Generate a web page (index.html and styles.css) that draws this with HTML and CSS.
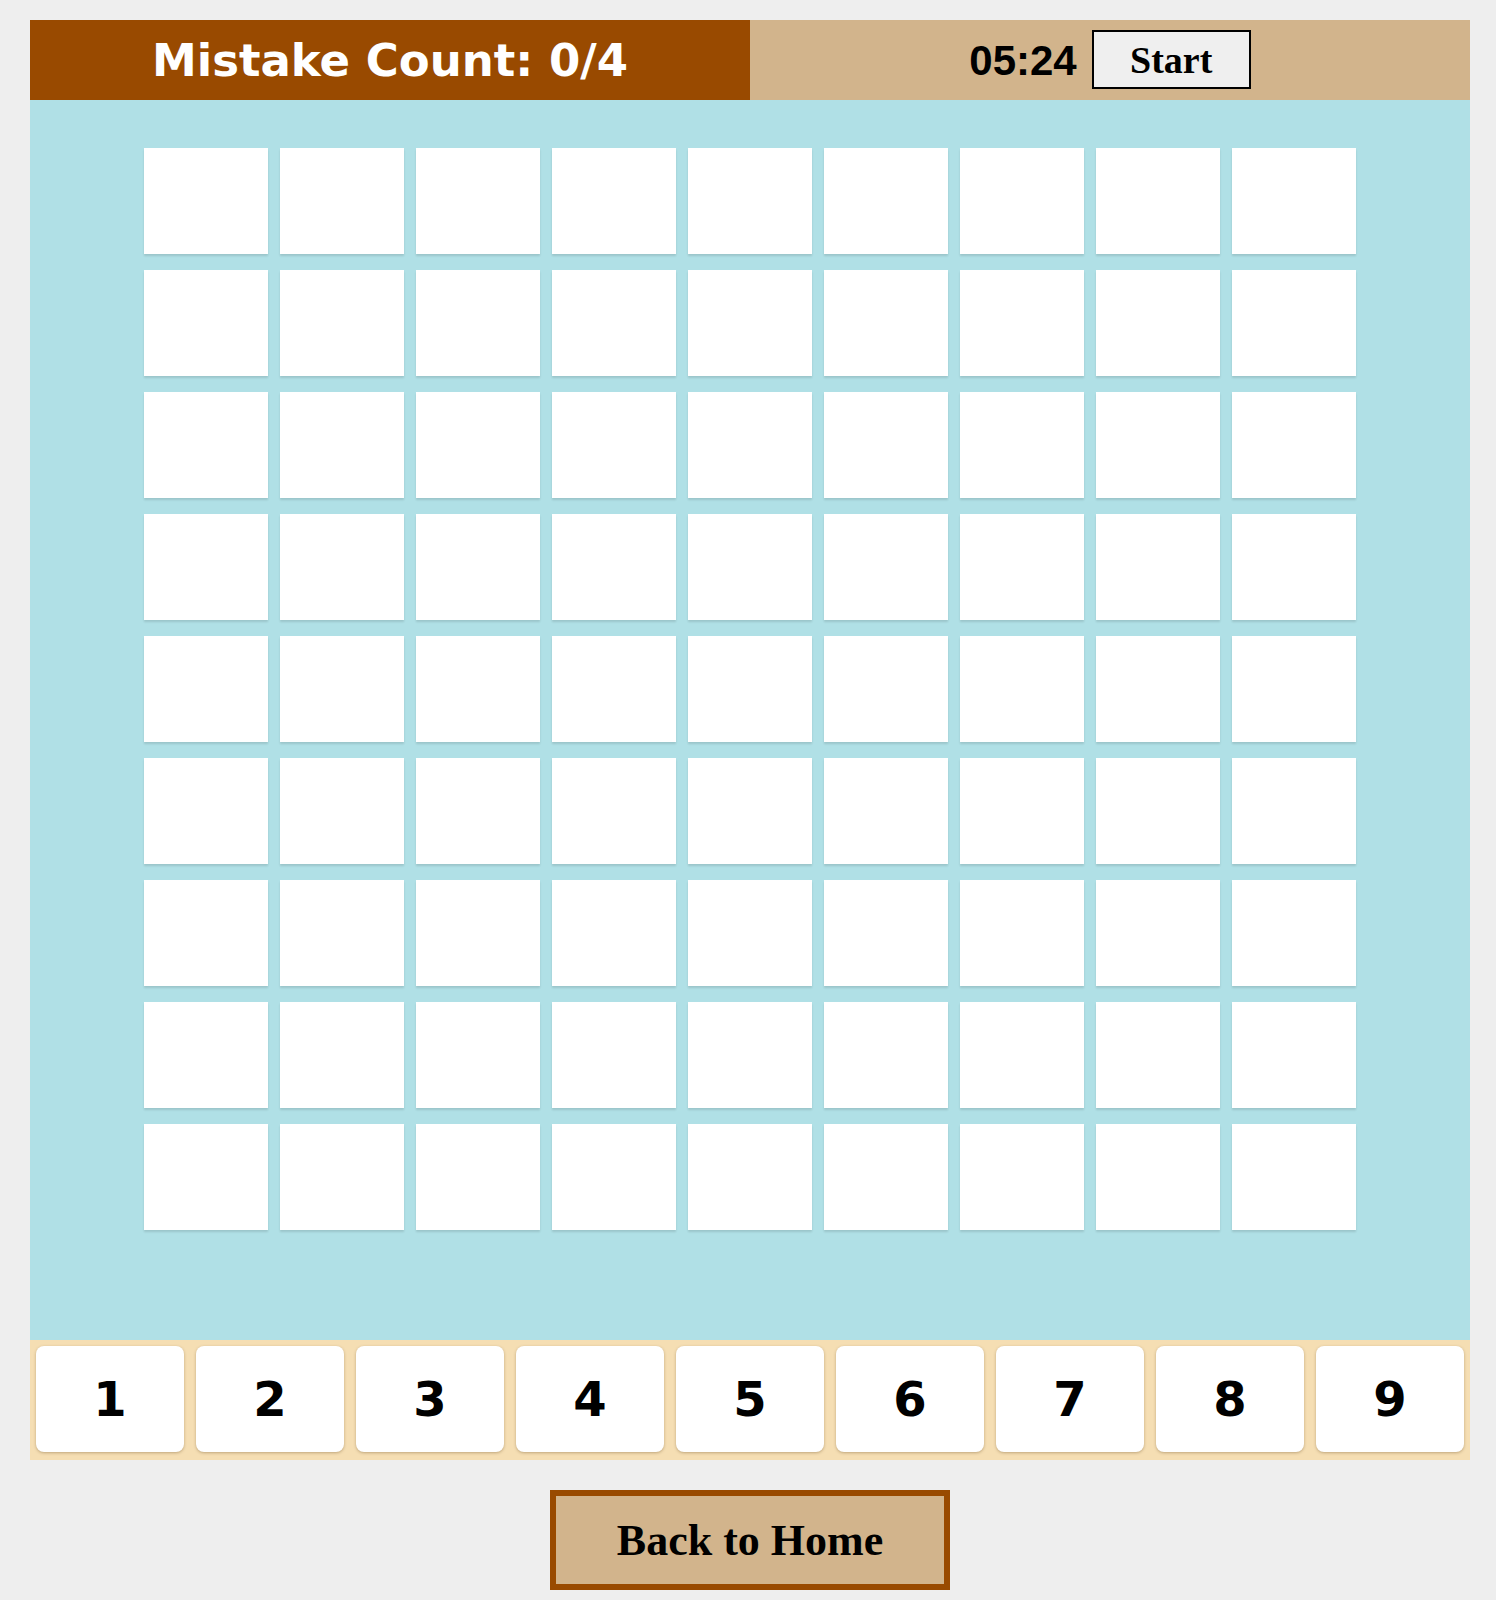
FILE: index.html
```html
<!DOCTYPE html>
<html lang="en">
<head>
<meta charset="utf-8">
<title>Sudoku</title>
<link rel="stylesheet" href="styles.css">
</head>
<body>
<div class="game">
  <div class="topbar">
    <div class="mistakes">Mistake Count: 0/4</div>
    <div class="timer-area">
      <span class="timer">05:24</span>
      <button class="start-btn">Start</button>
    </div>
  </div>
  <div class="board-area">
    <div class="board" id="board"></div>
  </div>
  <div class="numpad">
    <button class="num">1</button>
    <button class="num">2</button>
    <button class="num">3</button>
    <button class="num">4</button>
    <button class="num">5</button>
    <button class="num">6</button>
    <button class="num">7</button>
    <button class="num">8</button>
    <button class="num">9</button>
  </div>
  <div class="footer">
    <button class="home-btn">Back to Home</button>
  </div>
</div>
<script src="script.js"></script>
</body>
</html>
```
FILE: styles.css
```css
html, body {
  margin: 0;
  padding: 0;
  background: #eeeeee;
}
body {
  font-family: "DejaVu Sans", Verdana, sans-serif;
}
.game {
  width: 1440px;
  margin: 20px 0 0 30px;
}
.topbar {
  display: flex;
  height: 80px;
}
.mistakes {
  flex: 1;
  background: #994a00;
  color: #ffffff;
  font-family: "DejaVu Sans", Verdana, sans-serif;
  font-weight: bold;
  font-size: 45px;
  display: flex;
  align-items: center;
  justify-content: center;
}
.timer-area {
  flex: 1;
  background: #d2b48c;
  display: flex;
  align-items: center;
  justify-content: center;
  gap: 15px;
}
.timer {
  font-family: "Liberation Sans", Arial, sans-serif;
  font-weight: bold;
  font-size: 42px;
  color: #000;
  padding-top: 2px;
}
.start-btn {
  width: 159px;
  height: 59px;
  margin-top: -1px;
  border: 2px solid #000;
  background: #efefef;
  font-family: "Liberation Serif", "Times New Roman", serif;
  font-weight: bold;
  font-size: 38px;
  color: #000;
  padding: 0;
  line-height: 1;
}
.board-area {
  background: #b0e0e6;
  height: 1240px;
  padding-top: 48px;
  box-sizing: border-box;
}
.board {
  display: grid;
  grid-template-columns: repeat(9, 124px);
  grid-auto-rows: 106px;
  column-gap: 12px;
  row-gap: 16px;
  justify-content: center;
}
.cell {
  background: #ffffff;
  box-shadow: 0 2px 2px rgba(0, 0, 0, 0.12);
}
.numpad {
  background: #f5deb3;
  height: 120px;
  box-sizing: border-box;
  padding: 6px 6px 8px;
  display: grid;
  grid-template-columns: repeat(9, 1fr);
  column-gap: 12px;
}
.num {
  background: #ffffff;
  border: none;
  border-radius: 8px;
  box-shadow: 0 1px 3px rgba(90, 60, 20, 0.35);
  font-family: "DejaVu Sans", Verdana, sans-serif;
  font-weight: bold;
  font-size: 48px;
  color: #000;
  padding: 0;
  height: 106px;
}
.footer {
  display: flex;
  justify-content: center;
  padding-top: 30px;
}
.home-btn {
  width: 400px;
  height: 100px;
  border: 6px solid #994a00;
  background: #d2b48c;
  font-family: "Liberation Serif", "Times New Roman", serif;
  font-weight: bold;
  font-size: 44px;
  color: #000;
  padding: 0;
}
```
FILE: script.js
```js
var board = document.getElementById('board');
for (var i = 0; i < 81; i++) {
  var c = document.createElement('div');
  c.className = 'cell';
  board.appendChild(c);
}
```
